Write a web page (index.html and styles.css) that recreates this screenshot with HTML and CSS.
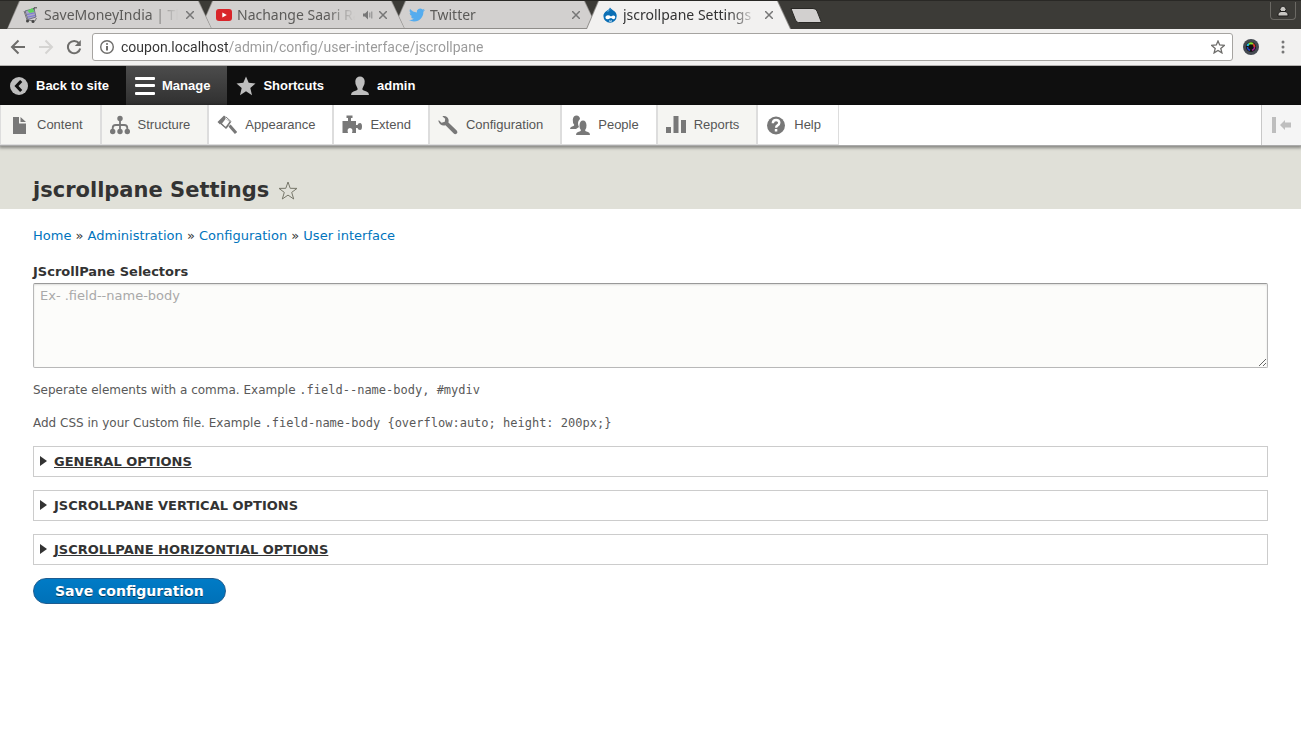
FILE: index.html
```
<!DOCTYPE html>
<html lang="en">
  <head>
    <meta charset="UTF-8" />
    <meta name="viewport" content="width=device-width, initial-scale=1.0" />
    <title>jscrollpane Settings</title>
    <link rel="stylesheet" href="styles.css">
  </head>
  <body>
    <div class="browser">
      <div class="tabs">
        <div class="tab">
          <svg class="favicon" viewBox="0 0 16 16">
            <path d="M2 4l9-2.500 2 8.500-8 2.500z" fill="#a9a8c4" stroke="#5d5c78" stroke-width=".8" />
            <path d="M4.500 3.500l5-2.500 2 4-5 1z" fill="#5fd35f" />
            <path d="M1 4l3 9 8 1 1.500-3" fill="none" stroke="#777" />
            <path d="M11 2.500V.800h3" stroke="#444" fill="none" />
            <path d="M4 7.500l7-1.500M5 10l7-1.500" stroke="#7b74d8" />
            <circle cx="4.500" cy="14" r="1.500" fill="#444" />
            <circle cx="10" cy="14.500" r="1.500" fill="#444" />
          </svg>
          <span class="tab-title">SaveMoneyIndia | The</span>
          <button class="tab-close" type="button" aria-label="Close tab"><svg viewBox="0 0 8 8"><path d="M0 0l8 8M8 0l-8 8" /></svg></button>
        </div>
        <div class="tab">
          <svg class="favicon" viewBox="0 0 16 16">
            <rect y="2" width="16" height="12" rx="3" fill="#d9252a" />
            <path d="M6.300 5.500v5l4.500-2.500z" fill="#fff" />
          </svg>
          <span class="tab-title">Nachange Saari Raat</span>
          <svg class="sound" viewBox="0 0 10 10">
            <path d="M0 3.500h2l3-3v9l-3-3h-2z" fill="#777" />
            <path d="M6.800 2.500v5M8.800 1.500v7" stroke="#888" fill="none" />
          </svg>
          <button class="tab-close" type="button" aria-label="Close tab"><svg viewBox="0 0 8 8"><path d="M0 0l8 8M8 0l-8 8" /></svg></button>
        </div>
        <div class="tab">
          <svg class="favicon" viewBox="0 0 24 24">
            <path fill="#55acee" d="M23.950 4.570a10 10 0 0 1-2.820.770 4.960 4.960 0 0 0 2.160-2.720c-.950.550-2 .950-3.130 1.180a4.920 4.920 0 0 0-8.380 4.480C7.690 8.090 4.070 6.130 1.640 3.160a4.820 4.820 0 0 0-.670 2.480c0 1.710.870 3.210 2.190 4.100a4.900 4.900 0 0 1-2.230-.620v.060a4.920 4.920 0 0 0 3.950 4.830 5 5 0 0 1-2.210.080 4.940 4.940 0 0 0 4.600 3.420A9.870 9.870 0 0 1 0 19.540a14 14 0 0 0 7.550 2.210c9.050 0 14-7.500 14-13.980 0-.210 0-.420-.020-.630a9.940 9.940 0 0 0 2.420-2.570z" />
          </svg>
          <span class="tab-title">Twitter</span>
          <button class="tab-close" type="button" aria-label="Close tab"><svg viewBox="0 0 8 8"><path d="M0 0l8 8M8 0l-8 8" /></svg></button>
        </div>
        <div class="tab active">
          <svg class="favicon" viewBox="0 0 16 16">
            <path d="M8 .500c1 1.700 2.300 2.200 3.700 3.300 2 1.400 3 3 3 5.200a6.600 6.600 0 0 1-13.300 0c0-2.100 1.200-3.900 3.100-5.100C6 3 7.500 2 8 .500z" fill="#0b6fb5" />
            <path d="M5.500 4.500c1-.600 2-1.200 2.500-2" stroke="#6fb9e8" fill="none" />
            <path d="M3.800 9.200c1.800-1.600 3.500-.900 5.200.300 1.400-.900 2.700-1.500 3.800-.400 1 1.300.200 3.200-1.100 3.100-1.100 0-1.800-.900-2.700-1.100-1 0-1.700 1.300-3.300 1.200-2 0-2.800-1.900-1.900-3.100z" fill="#fff" />
            <path d="M7 13.800c1 .600 2 .600 3-.100" stroke="#fff" fill="none" />
          </svg>
          <span class="tab-title">jscrollpane Settings</span>
          <button class="tab-close" type="button" aria-label="Close tab"><svg viewBox="0 0 8 8"><path d="M0 0l8 8M8 0l-8 8" /></svg></button>
        </div>
        <button class="new-tab" type="button" aria-label="New tab">
          <svg viewBox="0 0 34 17"><path d="M3 1.500h21q3 0 4 2.500l4.500 11.500h-23q-2 0-3-2.500l-4.500-11.500z" fill="#d2d0cf" stroke="#292825" /></svg>
        </button>
        <button class="profile" type="button" aria-label="Profile">
          <svg viewBox="0 0 12 12"><path d="M1 11V9q0-2 3-2.500a3 3 0 1 1 4 0q3 .500 3 2.500v2z" fill="#c8c6c2" stroke="#1e1d1b" /><path d="M3.500 6.500h5" stroke="#1e1d1b" /></svg>
        </button>
      </div>

      <div class="nav">
        <button class="nav-btn" type="button" aria-label="Back"><svg viewBox="0 0 16 16"><path d="M15 8H2M8.500 1.500L2 8l6.500 6.500" /></svg></button>
        <button class="nav-btn off" type="button" aria-label="Forward"><svg viewBox="0 0 16 16"><path d="M1 8h13M7.500 1.500L14 8l-6.500 6.500" /></svg></button>
        <button class="nav-btn" type="button" aria-label="Reload"><svg viewBox="0 0 16 16"><path d="M13 4.200A6.200 6.200 0 1 0 14.200 9.500" /><path class="solid" d="M14.800 1v6h-6z" /></svg></button>
        <div class="address">
          <svg class="info" viewBox="0 0 14 14"><circle cx="7" cy="7" r="6.300" /><path d="M7 6v4.500M7 3.200v1.600" /></svg>
          <input class="url" type="text" aria-label="Address" value="coupon.localhost/admin/config/user-interface/jscrollpane" />
          <svg class="bookmark" viewBox="0 0 14 14"><path d="M7 1l1.700 4 4.600.400-3.500 3 1.100 4.500L7 10.500l-3.900 2.400 1.100-4.500L.700 5.400l4.600-.400z" /></svg>
        </div>
        <svg class="extension" viewBox="0 0 16 16">
          <circle cx="8" cy="8" r="8" fill="#454a52" />
          <circle cx="8" cy="8" r="5" fill="#111" />
          <path d="M4.500 7A3.500 3.500 0 0 1 6 4.800" stroke="#20c5e8" stroke-width="2" fill="none" />
          <path d="M6 4.800a3.500 3.500 0 0 1 4 .200" stroke="#8be02b" stroke-width="2" fill="none" />
          <path d="M10 5a3.500 3.500 0 0 1 1.500 3" stroke="#d83a2a" stroke-width="2" fill="none" />
          <path d="M11.500 8a3.500 3.500 0 0 1-2.500 3.300" stroke="#a3238f" stroke-width="1.500" fill="none" />
          <path d="M7 11.300A3.500 3.500 0 0 1 4.500 8" stroke="#2444c0" stroke-width="1.500" fill="none" />
        </svg>
        <button class="menu-btn" type="button" aria-label="Menu"><svg viewBox="0 0 4 14"><circle cx="2" cy="2" r="1.500" /><circle cx="2" cy="7" r="1.500" /><circle cx="2" cy="12" r="1.500" /></svg></button>
      </div>
    </div>

    <nav class="toolbar-bar">
      <a href="#"><svg class="icon" viewBox="0 0 20 20"><circle cx="10" cy="10" r="9" fill="#bebebe" /><path d="M12.200 5L7.500 10l4.700 5" stroke="#0f0f0f" stroke-width="3" fill="none" /></svg>Back to site</a>
      <a class="active" href="#"><svg class="icon" viewBox="0 0 20 20"><g fill="#fff"><rect width="20" height="3" rx="1" y="1" /><rect width="20" height="3" rx="1" y="8" /><rect width="20" height="3" rx="1" y="16" /></g></svg>Manage</a>
      <a href="#"><svg class="icon" viewBox="0 0 20 20"><path d="M10 .500l2.700 6.300 6.800.600-5.200 4.500 1.700 7.300-6-3.900-6 3.900 1.700-7.300L.500 7.400l6.800-.600z" fill="#bebebe" /></svg>Shortcuts</a>
      <a href="#"><svg class="icon" viewBox="0 0 20 20"><path d="M1 19q0-3 2.500-3.600 3.500-.800 4-1.600.400-1.300-.600-2.800Q5 8.500 5.300 5q.700-4.500 4.700-4.500T14.700 5q.300 3.500-1.600 6-1 1.500-.600 2.800.500.800 4 1.600Q19 16 19 19z" fill="#bebebe" /></svg>admin</a>
    </nav>

    <nav class="tray">
      <a class="shaded" href="#"><svg class="icon" viewBox="0 0 20 20"><path d="M4 2h6v6.500h7V19H4zM11.500 2l5.500 5h-5.500z" /></svg>Content</a>
      <a class="shaded" href="#"><svg class="icon" viewBox="0 0 20 20"><circle cx="10" cy="3.500" r="2.700" /><circle cx="2.700" cy="16.500" r="2.700" /><circle cx="10" cy="16.500" r="2.700" /><circle cx="17.300" cy="16.500" r="2.700" /><path d="M10 4v12M2.700 16v-3q0-3 3-3h8.600q3 0 3 3v3" fill="none" stroke="#787878" stroke-width="1.800" /></svg>Structure</a>
      <a href="#"><svg class="icon" viewBox="0 0 20 20"><path d="M7 .500l2 1.500-6 7.500L.500 7zM8 3l5.500 4-4.500 7-5.500-5" /><path d="M8.700 3.700l3.700 3-3.800 5.300-3.600-3.500z" fill="#fff" /><path d="M9 2l5 4.500-4.500 6.500-6-4.500" fill="none" stroke="#787878" /><path d="M12.500 10.500l6.500 7.500" stroke="#787878" stroke-width="3" /></svg>Appearance</a>
      <a href="#"><svg class="icon" viewBox="0 0 20 20"><path d="M4.500.500h6v2.500H9v3h5v4h1.500q.500-2 2.500-2t2 3.500-2 3.500-2.500-2H14v5h-4q1.500-4.500-2-5-3.500.500-2 5H.500V6H6V3H4.500z" /></svg>Extend</a>
      <a class="shaded" href="#"><svg class="icon" viewBox="0 0 20 20"><path d="M5 1q4.500-.500 5.500 3.500.300 1.500-.100 3l8.300 8q1.500 2-.200 3.300-1.500 1-3-.600L7.500 10.300q-5 1.200-7-3.800L.700 5 3.500 7.700 6.800 6.800 7.200 3.700 4.500 1.500z" /></svg>Configuration</a>
      <a href="#"><svg class="icon" viewBox="0 0 20 20"><path d="M0 14q0-2 2-2.500 2-.500 2.300-1.500-1.800-2-1.500-5.500Q3.300.500 6.500.500T10 4q-3 2.500-1.500 7l.500 1-3 2z" /><path d="M6 20q0-2.500 2-3 3-.500 3-1.700-1.800-2-1.500-5Q9.800 5.500 13 5.500t3.500 4.800q.200 3-1.500 5 0 1.200 3 1.700 2 .500 2 3z" /></svg>People</a>
      <a class="shaded" href="#"><svg class="icon" viewBox="0 0 20 20"><path d="M0 12h5v6H0zM7.500 1h5v17h-5zM15 5h5v13h-5z" /></svg>Reports</a>
      <a href="#"><svg class="icon" viewBox="0 0 20 20"><circle cx="10" cy="10.500" r="9" /><path d="M6.800 8.300q.200-3.300 3.300-3.300t3.200 2.800q0 1.600-1.700 2.600-1.500.900-1.500 2.300" fill="none" stroke="#fff" stroke-width="2.400" /><rect x="8.800" y="14" width="2.500" height="2.500" fill="#fff" /></svg>Help</a>
      <button class="orientation" type="button" aria-label="Vertical orientation"><svg viewBox="0 0 20 16"><path d="M0 0h4v16H0zM8 8l5-5v2.500h6v5h-6v2.500z" /></svg></button>
    </nav>

    <header class="page-header">
      <h1>jscrollpane Settings</h1>
      <a href="#" aria-label="Add to shortcuts"><svg viewBox="0 0 20 20"><path d="M10 1l2.200 6.300 6.800.100-5.300 4 2 6.600L10 14.100 4.300 18l2-6.600L1 7.400l6.800-.100z" /></svg></a>
    </header>

    <main class="content">
      <nav class="breadcrumb">
        <a href="#">Home</a> » <a href="#">Administration</a> » <a href="#">Configuration</a> » <a href="#">User interface</a>
      </nav>

      <form>
        <label for="selectors">JScrollPane Selectors</label>
        <textarea id="selectors" placeholder="Ex- .field--name-body"></textarea>
        <p class="description">Seperate elements with a comma. Example <code>.field--name-body, #mydiv</code></p>
        <p class="description">Add CSS in your Custom file. Example <code>.field-name-body {overflow:auto; height: 200px;}</code></p>

        <details>
          <summary><span class="underlined">General Options</span></summary>
        </details>
        <details>
          <summary><span>jScrollPane Vertical Options</span></summary>
        </details>
        <details>
          <summary><span class="underlined">jScrollPane Horizontial Options</span></summary>
        </details>

        <button class="save" type="submit">Save configuration</button>
      </form>
    </main>
  </body>
</html>
```
FILE: styles.css
```
* {
  margin: 0;
  padding: 0;
  box-sizing: border-box;
}

body {
  background: #fff;
  color: #333;
  font-family: "DejaVu Sans", sans-serif;
  font-size: 13px;
  line-height: 20px;
}

button {
  border: none;
  background: none;
}

svg {
  display: block;
  flex: none;
}

a {
  color: #0074bd;
  text-decoration: none;
}

/* browser window */
.browser {
  font-family: "Noto Sans", sans-serif;
  background: #f2f1f0;
  border-bottom: 1px solid #b3b1af;
}

.tabs {
  display: flex;
  height: 29px;
  padding-left: 7px;
  background: #3c3b37;
  border-top: 1px solid #292825;
}

.tab {
  position: relative;
  z-index: 0;
  display: flex;
  align-items: center;
  flex: 0 1 205px;
  min-width: 0;
  margin-right: -12px;
  padding: 0 18px 0 16px;
  color: #5c5b59;
  background: #8f8d8a;
  clip-path: polygon(0 100%, 12px 0, calc(100% - 13px) 0, 100% 100%);
}

.tab:nth-child(1) {
  z-index: 3;
}

.tab:nth-child(2) {
  z-index: 2;
}

.tab::before {
  content: "";
  position: absolute;
  inset: 0 1px 1px;
  z-index: -1;
  background: #d2d0cf;
  clip-path: polygon(0 100%, 12px 0, calc(100% - 13px) 0, 100% 100%);
}

.tab.active {
  z-index: 4;
  color: #333;
}

.tab.active::before {
  bottom: 0;
  background: #f2f1f0;
}

.favicon {
  width: 16px;
  height: 16px;
}

.tab-title {
  flex: 1;
  min-width: 0;
  margin: 0 8px 0 5px;
  overflow: hidden;
  white-space: nowrap;
  font-size: 14px;
  mask-image: linear-gradient(to left, transparent, #000 28px);
}

.sound {
  width: 10px;
  height: 10px;
  margin-right: 6px;
}

.tab-close svg {
  width: 8px;
  height: 8px;
  stroke: #777;
  stroke-width: 1.5;
}

.new-tab {
  margin: 6px 0 0 10px;
  align-self: flex-start;
}

.new-tab svg {
  width: 34px;
  height: 17px;
}

.profile {
  display: flex;
  justify-content: center;
  align-items: center;
  width: 26px;
  height: 18px;
  margin: 1px 5px 0 auto;
  border: 1px solid #6b6964;
  border-top: none;
  border-radius: 0 0 4px 4px;
}

.profile svg {
  width: 12px;
  height: 12px;
}

.nav {
  display: flex;
  align-items: center;
  height: 36px;
  padding: 0 8px 0 10px;
}

.nav-btn {
  margin-right: 12px;
}

.nav-btn svg {
  width: 16px;
  height: 16px;
  fill: none;
  stroke: #6e6d6b;
  stroke-width: 2;
}

.nav-btn .solid {
  fill: #6e6d6b;
  stroke: none;
}

.nav-btn.off svg {
  stroke: #d5d4d2;
}

.address {
  display: flex;
  align-items: center;
  flex: 1;
  height: 28px;
  margin-left: -2px;
  padding: 0 7px;
  background: #fff;
  border: 1px solid #a6a4a1;
  border-radius: 3px;
}

.info,
.bookmark {
  width: 14px;
  height: 14px;
  fill: none;
  stroke: #6e6d6b;
}

.info {
  stroke-width: 2;
}

.info circle {
  stroke-width: 1.4;
}

.bookmark {
  stroke-width: 1.3;
}

.url {
  flex: 1;
  margin: 0 7px;
  border: none;
  outline: none;
  font-family: Roboto, sans-serif;
  font-size: 14px;
  line-height: 20px;
  color: transparent;
  background: linear-gradient(to right, #333 107px, #999 107px);
  background-clip: text;
}

.extension {
  width: 16px;
  height: 16px;
  margin: 0 22px 0 10px;
}

.menu-btn svg {
  width: 4px;
  height: 14px;
  margin-right: 8px;
  fill: #777;
}

/* admin toolbar */
.toolbar-bar,
.tray {
  display: flex;
  font-family: "Liberation Sans", sans-serif;
}

.toolbar-bar {
  height: 39px;
  background: #0f0f0f;
}

.toolbar-bar a,
.tray a {
  display: flex;
  align-items: center;
  padding: 0 17px 0 9px;
}

.toolbar-bar a {
  color: #fff;
  font-weight: bold;
}

.toolbar-bar .active {
  background: linear-gradient(#4c4c4c, #303030);
}

.icon {
  width: 20px;
  height: 20px;
  margin-right: 7px;
}

.tray {
  position: relative;
  height: 41px;
  background: #fff;
  border-bottom: 1px solid #aaa;
  box-shadow: 0 1px 3px 1px rgba(0, 0, 0, 0.4);
}

.tray a {
  padding-left: 8px;
  color: #565656;
  border: 1px solid #ddd;
  border-top: none;
}

.tray .shaded {
  background: #f5f5f2;
}

.tray .icon {
  margin-right: 8px;
  fill: #787878;
}

.orientation {
  width: 40px;
  margin-left: auto;
  padding-left: 10px;
  background: #f5f5f5;
  border-left: 1px solid #c8c8c8;
}

.orientation svg {
  width: 20px;
  height: 16px;
  fill: #bebebe;
}

/* page */
.page-header {
  display: flex;
  align-items: center;
  padding: 29px 33px 3px;
  background: #e0e0d8;
}

h1 {
  font-size: 21px;
  line-height: 31px;
}

.page-header svg {
  width: 20px;
  height: 20px;
  margin-left: 9px;
  fill: none;
  stroke: #77776a;
}

.content {
  padding: 17px 33px;
}

.breadcrumb {
  margin-bottom: 16px;
}

label {
  display: block;
  font-weight: bold;
}

textarea {
  display: block;
  width: 100%;
  height: 85px;
  margin: 1px 0 12px;
  padding: 2px 6px;
  font: inherit;
  background: #fcfcfa;
  border: 1px solid #b8b8b8;
  border-top-color: #999;
  border-radius: 2px;
  box-shadow: inset 0 1px 2px rgba(0, 0, 0, 0.125);
}

textarea::placeholder {
  color: #a9a9a9;
}

.description {
  margin-bottom: 13px;
  color: #595959;
  font-size: 12px;
}

code {
  font-family: "DejaVu Sans Mono", monospace;
}

details {
  margin-bottom: 13px;
  border: 1px solid #ccc;
}

summary {
  display: flex;
  align-items: center;
  padding: 5px 6px 4px;
  font-weight: bold;
  text-transform: uppercase;
}

summary::before {
  content: "";
  margin: 0 7px 2px 0;
  border: 5px solid transparent;
  border-left: 7px solid #333;
  border-right: none;
}

.underlined {
  text-decoration: underline;
}

.save {
  height: 26px;
  padding: 0 21px;
  color: #fff;
  font: bold 14px "DejaVu Sans", sans-serif;
  text-shadow: 0 1px rgba(0, 0, 0, 0.5);
  background: linear-gradient(#007bc6, #0071b8);
  border: 1px solid #1e5c90;
  border-radius: 13px;
}
```
